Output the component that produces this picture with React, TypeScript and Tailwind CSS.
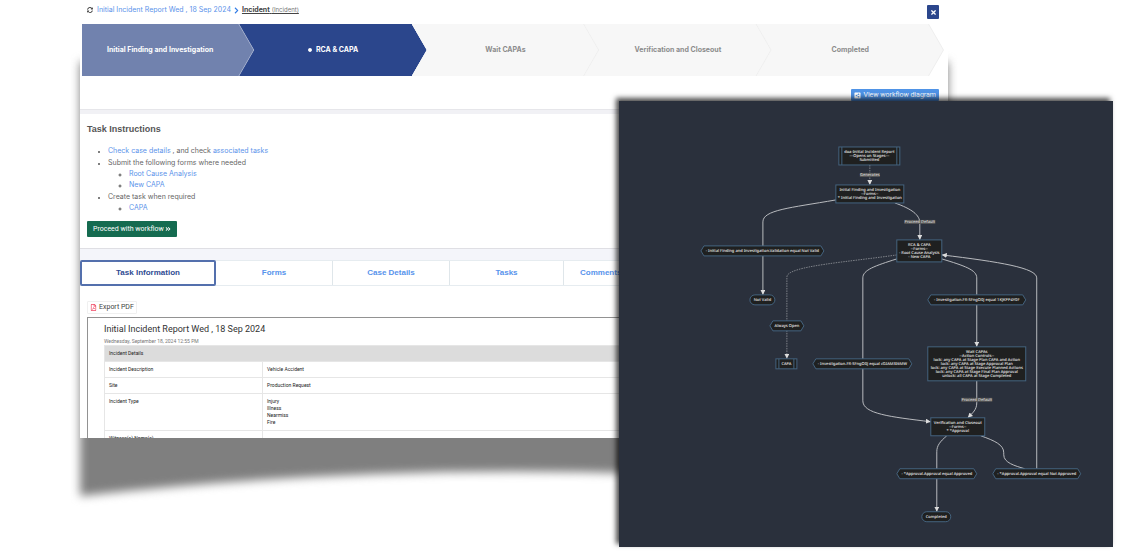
import {
  FaRegFilePdf,
  FaShareAltSquare,
  FaTimes,
  FaChevronRight,
  FaAngleDoubleRight,
  FaCircle,
  FaSyncAlt,
} from "react-icons/fa";

interface Step {
  label: string;
  state: "done" | "active" | "todo";
}

const steps: Step[] = [
  { label: "Initial Finding and Investigation", state: "done" },
  { label: "RCA & CAPA", state: "active" },
  { label: "Wait CAPAs", state: "todo" },
  { label: "Verification and Closeout", state: "todo" },
  { label: "Completed", state: "todo" },
];

const stepColors = {
  done: "bg-[#7182ae] text-white",
  active: "bg-[#2b468c] text-white",
  todo: "bg-[#f7f7f7] text-[#8c8c8c]",
};

const seamColors = {
  done: "bg-[#a9b4d0]",
  active: "bg-[#2b468c]",
  todo: "bg-[#eeeeee]",
};

const Steps = () => (
  <ol className="flex h-[52px] mt-1 ml-0.5 mr-1 text-[7px] font-bold">
    {steps.map((step, i) => (
      <li
        key={step.label}
        className={`${seamColors[step.state]} ${
          i === 0
            ? "flex-[172] [clip-path:polygon(0_0,calc(100%-15px)_0,100%_50%,calc(100%-15px)_100%,0_100%)]"
            : "flex-[187] -ml-[15px] [clip-path:polygon(0_0,calc(100%-15px)_0,100%_50%,calc(100%-15px)_100%,0_100%,15px_50%)]"
        }`}
      >
        <div
          className={`${stepColors[step.state]} flex h-full items-center justify-center gap-1 [clip-path:polygon(0_0,calc(100%-16px)_0,calc(100%-1px)_50%,calc(100%-16px)_100%,0_100%)] ${
            i === 0 ? "pr-4" : ""
          }`}
        >
          {step.state === "active" && <FaCircle className="size-1" />}
          {step.label}
        </div>
      </li>
    ))}
  </ol>
);

const Instructions = () => (
  <section className="px-[7px] pt-2 pb-[11px]">
    <h2 className="font-['Liberation_Sans',sans-serif] text-[9px] leading-[14px] font-bold text-[#555]">
      Task Instructions
    </h2>
    <ul className="mt-[9px] list-disc space-y-px pl-[21px] text-[7px] leading-[11px] text-[#666] marker:text-[5px] marker:text-[#555]">
      <li>
        <a href="#details" className="text-[#5b93ea]">Check case details</a> , and check{" "}
        <a href="#tasks" className="text-[#5b93ea]">associated tasks</a>
      </li>
      <li>
        Submit the following forms where needed
        <ul className="list-[circle] pl-[21px]">
          <li><a href="#rca" className="text-[#5b93ea]">Root Cause Analysis</a></li>
          <li><a href="#new-capa" className="text-[#5b93ea]">New CAPA</a></li>
        </ul>
      </li>
      <li>
        Create task when required
        <ul className="list-[circle] pl-[21px]">
          <li><a href="#capa" className="text-[#5b93ea]">CAPA</a></li>
        </ul>
      </li>
    </ul>
    <button
      type="button"
      className="mt-2 flex h-4 items-center gap-px rounded-[1px] bg-[#156b50] px-1.5 font-[Roboto,sans-serif] text-[7px] text-white"
    >
      Proceed with workflow <FaAngleDoubleRight className="size-[6px]" />
    </button>
  </section>
);

const tabs = [
  { label: "Task Information", width: "w-[136px]" },
  { label: "Forms", width: "w-[117px]" },
  { label: "Case Details", width: "w-[117px]" },
  { label: "Tasks", width: "w-[114px]" },
  { label: "Comments", width: "flex-1" },
];

const Tabs = () => (
  <div
    role="tablist"
    className="flex h-[26px] border-y border-[#e6ecf0] font-['Liberation_Sans',sans-serif] text-[8px] font-bold"
  >
    {tabs.map((tab, i) => (
      <button
        key={tab.label}
        type="button"
        role="tab"
        aria-selected={i === 0}
        className={`${tab.width} ${
          i === 0
            ? "-my-px rounded-[2px] border-2 border-[#5470ad] text-[#2f4b92]"
            : "border-r border-[#dfe6ea] text-[#5793ec]"
        } ${tab.width === "flex-1" ? "pl-4 text-left" : "text-center"}`}
      >
        {tab.label}
      </button>
    ))}
  </div>
);

const details = [
  { name: "Incident Description", values: ["Vehicle Accident"] },
  { name: "Site", values: ["Production Request"] },
  { name: "Incident Type", values: ["Injury", "Illness", "Nearmiss", "Fire"] },
  { name: "Witness(s) Name(s)", values: [""] },
];

const Report = () => (
  <section className="px-[7px] pt-[15px] font-[Roboto,sans-serif]">
    <button
      type="button"
      className="flex h-[13px] items-center gap-0.5 rounded-[1px] border border-[#f0f0f0] px-0.5 text-[7px] text-[#444]"
    >
      <FaRegFilePdf className="size-[7px] text-[#ef4562]" /> Export PDF
    </button>
    <div className="mt-[3px] border-t border-l border-[#929292] pl-4">
      <h3 className="pt-1 text-[9px] leading-[14px] text-[#333]">
        Initial Incident Report Wed , 18 Sep 2024
      </h3>
      <p className="pt-px text-[5px] leading-[8px] text-[#777]">
        Wednesday, September 18, 2024 12:55 PM
      </p>
      <table className="w-full table-fixed border-collapse border border-[#e6e6e6] text-left align-top text-[5px] leading-[7px] text-[#222]">
        <colgroup>
          <col className="w-[158px]" />
          <col />
        </colgroup>
        <thead>
          <tr className="h-4 bg-[#dcdcdc]">
            <th colSpan={2} className="px-1 font-normal">Incident Details</th>
          </tr>
        </thead>
        <tbody>
          {details.map((row) => (
            <tr key={row.name} className="border-t border-[#e6e6e6]">
              <th className="px-1 py-1 align-top font-normal">{row.name}</th>
              <td className="border-l border-[#e6e6e6] px-1 py-1">
                {row.values.map((value) => (
                  <div key={value}>{value}</div>
                ))}
              </td>
            </tr>
          ))}
        </tbody>
      </table>
    </div>
  </section>
);

interface DiagramNode {
  shape: "box" | "sub" | "hex" | "pill";
  x: number;
  y: number;
  w: number;
  h: number;
  lines: string[];
}

const nodes: DiagramNode[] = [
  { shape: "sub", x: 839, y: 147, w: 61, h: 18, lines: ["doa-Initial Incident Report", "---Opens on Stages---", "Submitted"] },
  { shape: "box", x: 836, y: 185, w: 68, h: 18, lines: ["Initial Finding and Investigation", "--Forms--", "* Initial Finding and Investigation"] },
  { shape: "hex", x: 701, y: 246, w: 123, h: 10, lines: ["- Initial Finding and Investigation.Validation equal Not Valid"] },
  { shape: "box", x: 897, y: 240, w: 45, h: 22, lines: ["RCA & CAPA", "--Forms--", "- Root Cause Analysis", "- New CAPA"] },
  { shape: "pill", x: 750, y: 295, w: 25, h: 10, lines: ["Not Valid"] },
  { shape: "hex", x: 770, y: 321, w: 34, h: 10, lines: ["Always Open"] },
  { shape: "sub", x: 776, y: 359, w: 21, h: 10, lines: ["CAPA"] },
  { shape: "hex", x: 813, y: 359, w: 99, h: 10, lines: ["- Investigation.FR-SFngO0J equal cGIAM3I6MW"] },
  { shape: "hex", x: 928, y: 295, w: 98, h: 10, lines: ["- Investigation.FR-SFngO0J equal 1KJKPP4Y0F"] },
  {
    shape: "box", x: 928, y: 347, w: 98, h: 34,
    lines: [
      "Wait CAPAs",
      "--Action Controls--",
      "lock: any CAPA at Stage Plan CAPA and Action",
      "lock: any CAPA at Stage Approval Plan",
      "lock: any CAPA at Stage Execute Planned Actions",
      "lock: any CAPA at Stage Final Plan Approval",
      "unlock: all CAPA at Stage Completed",
    ],
  },
  { shape: "box", x: 931, y: 418, w: 54, h: 18, lines: ["Verification and Closeout", "--Forms--", "* *Approval"] },
  { shape: "hex", x: 897, y: 469, w: 80, h: 10, lines: ["- *Approval.Approval equal Approved"] },
  { shape: "hex", x: 993, y: 469, w: 88, h: 10, lines: ["- *Approval.Approval equal Not Approved"] },
  { shape: "pill", x: 922, y: 512, w: 29, h: 10, lines: ["Completed"] },
];

const edges = [
  { d: "M870 165V185", dashed: true, arrow: true },
  { d: "M836 200C790 208 763 210 763 222V295", arrow: true },
  { d: "M895 203C912 209 920 215 920 223V240", arrow: true },
  { d: "M897 255C850 262 787 266 787 277V359", dashed: true, arrow: true },
  { d: "M897 259C875 266 863 270 863 278V401C863 414 890 417 931 422", arrow: true },
  { d: "M942 259C965 266 977 270 977 278V347", arrow: true },
  { d: "M977 381V403C977 410 973 413 968 418", arrow: true },
  { d: "M947 436C940 442 937 446 937 452V512", arrow: true },
  { d: "M981 436C995 441 1004 445 1004 453V455C1004 463 1015 466 1025 469" },
  { d: "M1037 469V278C1037 268 1000 262 942 255", arrow: true },
];

const edgeLabels = [
  { x: 870, y: 175, w: 20, text: "Generates" },
  { x: 920, y: 222, w: 31, text: "Proceed Default" },
  { x: 977, y: 400, w: 31, text: "Proceed Default" },
];

const NodeShape = ({ shape, x, y, w, h }: DiagramNode) => {
  if (shape === "hex") {
    const r = x + w;
    const b = y + h;
    return (
      <path
        d={`M${x + 3} ${y}H${r - 3}L${r} ${y + h / 2}L${r - 3} ${b}H${x + 3}L${x} ${y + h / 2}Z`}
      />
    );
  }
  return (
    <>
      <rect x={x} y={y} width={w} height={h} rx={shape === "pill" ? h / 2 : 0} />
      {shape === "sub" && <path d={`M${x + 3} ${y}v${h}M${x + w - 3} ${y}v${h}`} />}
    </>
  );
};

const Diagram = () => (
  <svg
    viewBox="619 101 494 446"
    role="img"
    aria-label="Workflow diagram"
    textRendering="geometricPrecision"
    className="block h-auto w-full font-['Noto_Sans',sans-serif] text-[4px] font-medium"
  >
    <defs>
      <marker id="arrow" viewBox="0 0 4 4" refX="4" refY="2" markerWidth="5" markerHeight="5" markerUnits="userSpaceOnUse" orient="auto">
        <path d="M0 0L4 2L0 4Z" fill="#dcdcdc" />
      </marker>
    </defs>
    {edges.map((edge) => (
      <path
        key={edge.d}
        d={edge.d}
        fill="none"
        stroke={edge.dashed ? "#a3a6ab" : "#b9bbbf"}
        strokeWidth={edge.dashed ? 0.7 : 1}
        strokeDasharray={edge.dashed ? "1.5 1" : undefined}
        markerEnd={edge.arrow ? "url(#arrow)" : undefined}
      />
    ))}
    {edgeLabels.map((label) => (
      <g key={`${label.x}-${label.y}`}>
        <rect x={label.x - label.w / 2} y={label.y - 2} width={label.w} height="4" fill="#585858" />
        <text x={label.x} y={label.y + 1.4} textAnchor="middle" fill="#d6d6d6">{label.text}</text>
      </g>
    ))}
    {nodes.map((node) => (
      <g key={`${node.x}-${node.y}`}>
        <g fill="#1f2020" stroke="#44637f" strokeWidth="1">
          <NodeShape {...node} />
        </g>
        <text textAnchor="middle" fill="#ececec">
          {node.lines.map((line, i) => (
            <tspan
              key={i}
              x={node.x + node.w / 2}
              y={node.y + node.h / 2 + 1.4 + (i - (node.lines.length - 1) / 2) * 4}
            >
              {line}
            </tspan>
          ))}
        </text>
      </g>
    ))}
  </svg>
);

const App = () => {
  return (
    <main className="relative min-h-screen overflow-hidden bg-white pr-[174px] pl-20 font-[Inter,'Liberation_Sans',sans-serif]">
      <div className="relative">
        {/* curved drop shadow under the case window */}
        <svg
          viewBox="0 0 868 500"
          preserveAspectRatio="none"
          aria-hidden="true"
          className="absolute top-0 left-0 h-[500px] w-full overflow-visible blur-[5px]"
        >
          <path d="M0 62H868V496Q434 447 0 496Z" fill="#7f7f7f" />
        </svg>

        <div className="relative h-[438px] overflow-hidden bg-white">
          <header className="flex h-5 items-center gap-1 pr-[9px] pl-[7px] text-[7px]">
            <FaSyncAlt className="size-[6px] text-[#444]" />
            <nav className="flex flex-1 items-center gap-0.5" aria-label="Breadcrumb">
              <a href="#report" className="text-[#5b93ea]">Initial Incident Report Wed , 18 Sep 2024</a>
              <FaChevronRight className="size-[7px] text-[#2f7ae5]" />
              <a href="#incident" className="text-[#444] underline">
                <span className="font-bold">Incident</span>{" "}
                <span className="text-[6px] text-[#777]">(Incident)</span>
              </a>
            </nav>
            <button
              type="button"
              aria-label="Close"
              className="mt-1 flex h-[14px] w-3 items-center justify-center rounded-[1px] bg-[#2b468c] text-white"
            >
              <FaTimes className="size-[7px]" />
            </button>
          </header>

          <Steps />

          <div className="flex justify-end pt-[13px] pr-[9px] pb-2">
            <button
              type="button"
              className="flex h-3 items-center gap-0.5 rounded-[1px] bg-[#4f93e6] px-[3px] font-[Roboto,sans-serif] text-[7px] text-white"
            >
              <FaShareAltSquare className="size-[7px]" /> View workflow diagram
            </button>
          </div>

          <div className="h-[5px] border-t border-[#e6e6ea] bg-[#f1f1f5]" />
          <Instructions />
          <div className="h-3 border-t border-[#dfdfe4] bg-[#f4f5fa]" />
          <Tabs />
          <Report />
        </div>
      </div>

      {/* the diagram window lies over the case window */}
      <div className="absolute top-[101px] right-[9px] w-[44%] bg-[#2a303c] shadow-[-3px_-3px_5px_rgba(0,0,0,0.7)]">
        <Diagram />
      </div>
    </main>
  );
};

export default App;
